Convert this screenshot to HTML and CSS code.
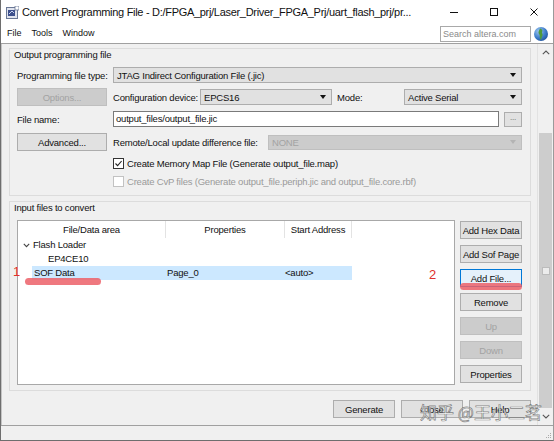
FILE: index.html
```html
<!DOCTYPE html>
<html>
<head>
<meta charset="utf-8">
<link rel="stylesheet" href="styles.css">
</head>
<body>
<div class="window">
  <div class="titlebar">
    <svg class="app-icon" width="13" height="13" viewBox="0 0 13 13">
      <rect x="0.5" y="1.5" width="11" height="11" fill="#dfe3ee" stroke="#6a7896"/>
      <rect x="2" y="4" width="7" height="6" fill="#3c4f8c"/>
      <path d="M3 8 L6 5 L8 7" stroke="#c9d3f0" stroke-width="1" fill="none"/>
      <rect x="9" y="0" width="4" height="4" fill="#ffffff" stroke="#6a7896" stroke-width="0.8"/>
    </svg>
    <span class="title">Convert Programming File - D:/FPGA_prj/Laser_Driver_FPGA_Prj/uart_flash_prj/pr...</span>
    <div class="wincontrols">
      <svg class="wc wc-min" width="10" height="10" viewBox="0 0 10 10"><path d="M1 5.5 H9" stroke="#111" stroke-width="1"/></svg>
      <svg class="wc wc-max" width="10" height="10" viewBox="0 0 10 10"><rect x="1.5" y="1.5" width="7" height="7" fill="none" stroke="#111" stroke-width="1"/></svg>
      <svg class="wc wc-close" width="10" height="10" viewBox="0 0 10 10"><path d="M1.5 1.5 L8.5 8.5 M8.5 1.5 L1.5 8.5" stroke="#111" stroke-width="1"/></svg>
    </div>
  </div>

  <div class="menubar">
    <span class="menu">File</span>
    <span class="menu">Tools</span>
    <span class="menu">Window</span>
    <div class="spacer"></div>
    <div class="search">Search altera.com</div>
    <svg class="globe" width="16" height="16" viewBox="0 0 16 16">
      <defs>
        <radialGradient id="gl" cx="0.35" cy="0.3" r="0.8">
          <stop offset="0" stop-color="#9cc6f0"/>
          <stop offset="0.6" stop-color="#3d7cc9"/>
          <stop offset="1" stop-color="#1d4f98"/>
        </radialGradient>
      </defs>
      <circle cx="8" cy="8" r="7" fill="url(#gl)"/>
      <path d="M7 2.5 C9 3 10 4.5 9 6 C8.5 7 10 8 9.5 9.5 C9 11 8 12 8.5 14 C7 13 6.5 11.5 6.8 10 C7 8.5 5.5 8 5.5 6.5 C5.5 5 6.5 4 7 2.5 Z" fill="#4f9a3c"/>
    </svg>
  </div>

  <div class="main">
    <div class="content">
      <div class="group g1">
        <div class="group-title">Output programming file</div>

        <div class="row r1">
          <span class="label lw96">Programming file type:</span>
          <div class="combo grow">
            <span>JTAG Indirect Configuration File (.jic)</span>
            <svg class="arrow" width="6" height="4" viewBox="0 0 6 4"><path d="M0 0 H6 L3 4 Z" fill="#111"/></svg>
          </div>
        </div>

        <div class="row r2">
          <div class="btn btn-side disabled">Options...</div>
          <span class="label lw87 ml6">Configuration device:</span>
          <div class="combo w132">
            <span>EPCS16</span>
            <svg class="arrow" width="6" height="4" viewBox="0 0 6 4"><path d="M0 0 H6 L3 4 Z" fill="#111"/></svg>
          </div>
          <span class="label lw67 ml5">Mode:</span>
          <div class="combo w118">
            <span>Active Serial</span>
            <svg class="arrow" width="6" height="4" viewBox="0 0 6 4"><path d="M0 0 H6 L3 4 Z" fill="#111"/></svg>
          </div>
        </div>

        <div class="row r3">
          <span class="label lw96">File name:</span>
          <div class="textbox">output_files/output_file.jic</div>
          <div class="btn dots">...</div>
        </div>

        <div class="row r4">
          <div class="btn btn-side">Advanced...</div>
          <span class="label lw155 ml6">Remote/Local update difference file:</span>
          <div class="combo combo-dis grow">
            <span>NONE</span>
            <svg class="arrow" width="6" height="4" viewBox="0 0 6 4"><path d="M0 0 H6 L3 4 Z" fill="#b4b4b4"/></svg>
          </div>
        </div>

        <div class="row r5 check-row">
          <span class="cb">
            <svg width="9" height="9" viewBox="0 0 9 9"><path d="M1.5 4.5 L3.6 6.6 L7.6 2" stroke="#222" stroke-width="1.1" fill="none"/></svg>
          </span>
          <span class="cb-label">Create Memory Map File (Generate output_file.map)</span>
        </div>

        <div class="row r6 check-row">
          <span class="cb cb-dis"></span>
          <span class="cb-label dis-text">Create CvP files (Generate output_file.periph.jic and output_file.core.rbf)</span>
        </div>
      </div>

      <div class="group g2">
        <div class="group-title">Input files to convert</div>
        <div class="inputs">
          <div class="table">
            <div class="thead">
              <div class="th c1">File/Data area</div>
              <div class="th c2">Properties</div>
              <div class="th c3">Start Address</div>
            </div>
            <div class="tr tr-parent">
              <span class="expander">
                <svg width="7" height="5" viewBox="0 0 7 5"><path d="M0.8 0.8 L3.5 3.6 L6.2 0.8" stroke="#444" stroke-width="1.1" fill="none"/></svg>
              </span>
              <span>Flash Loader</span>
            </div>
            <div class="tr tr-child">EP4CE10</div>
            <div class="tr tr-sel">
              <span class="td d1">SOF Data</span>
              <span class="td d2">Page_0</span>
              <span class="td d3">&lt;auto&gt;</span>
            </div>
          </div>
          <div class="side-buttons">
            <div class="btn">Add Hex Data</div>
            <div class="btn">Add Sof Page</div>
            <div class="btn focused">Add File...</div>
            <div class="btn">Remove</div>
            <div class="btn disabled">Up</div>
            <div class="btn disabled">Down</div>
            <div class="btn">Properties</div>
          </div>
        </div>
      </div>

      <div class="dialog-buttons">
        <div class="btn">Generate</div>
        <div class="btn">Close</div>
        <div class="btn">Help</div>
      </div>
    </div>

    <div class="vscroll">
      <div class="sb-btn">
        <svg width="8" height="5" viewBox="0 0 8 5"><path d="M0.8 4.2 L4 1 L7.2 4.2" stroke="#555" stroke-width="1.1" fill="none"/></svg>
      </div>
      <div class="sb-track">
        <div class="sb-thumb"><span class="grip"></span></div>
      </div>
      <div class="sb-btn">
        <svg width="8" height="5" viewBox="0 0 8 5"><path d="M0.8 0.8 L4 4 L7.2 0.8" stroke="#555" stroke-width="1.1" fill="none"/></svg>
      </div>
    </div>
  </div>

  <div class="statusbar">
    <svg class="sizegrip" width="8" height="8" viewBox="0 0 8 8">
      <rect x="6" y="2" width="1" height="1" fill="#aaa"/>
      <rect x="4" y="4" width="1" height="1" fill="#aaa"/>
      <rect x="6" y="4" width="1" height="1" fill="#aaa"/>
      <rect x="2" y="6" width="1" height="1" fill="#aaa"/>
      <rect x="4" y="6" width="1" height="1" fill="#aaa"/>
      <rect x="6" y="6" width="1" height="1" fill="#aaa"/>
    </svg>
  </div>

  <span class="note note1">1</span>
  <span class="mark mark1"></span>
  <span class="note note2">2</span>
  <span class="mark mark2"></span>
  <div class="watermark">知乎 @王小二茗</div>
</div>
</body>
</html>
```

FILE: styles.css
```css
* { box-sizing: border-box; }

html, body {
  margin: 0;
  padding: 0;
  background: #ffffff;
}

body {
  font-family: "Liberation Sans", Arial, sans-serif;
  font-size: 9.5px;
  letter-spacing: -0.2px;
  color: #111;
}

.window {
  position: relative;
  width: 554px;
  height: 441px;
  border-left: 1px solid #6e6e6e;
  border-right: 1px solid #9a9a9a;
  border-bottom: 1px solid #6e6e6e;
  display: flex;
  flex-direction: column;
  overflow: hidden;
}

/* title bar */
.titlebar {
  height: 23px;
  flex: none;
  display: flex;
  align-items: center;
  background: #fff;
  padding-left: 5px;
}
.app-icon { flex: none; margin-top: 1px; }
.title {
  margin-left: 3px;
  font-size: 11px;
  letter-spacing: -0.3px;
  color: #111;
  white-space: nowrap;
}
.wincontrols {
  margin-left: auto;
  display: flex;
  align-items: center;
}
.wc { display: block; }
.wc-min { margin-right: 30px; }
.wc-max { margin-right: 30px; }
.wc-close { margin-right: 14px; }

/* menu bar */
.menubar {
  height: 20px;
  flex: none;
  display: flex;
  align-items: center;
  background: #fff;
  padding-left: 6px;
  font-size: 9px;
  letter-spacing: 0;
}
.menu { margin-right: 10px; }
.spacer { flex: 1; }
.search {
  width: 91px;
  height: 16px;
  border: 1px solid #a9a9a9;
  background: #fff;
  color: #8a8a8a;
  font-size: 9px;
  line-height: 14px;
  padding-left: 2px;
  margin-top: 1px;
}
.globe { margin: 2px 4px 0 2px; display: block; }

/* main area */
.main {
  height: 382px;
  flex: none;
  display: flex;
  border-top: 1px solid #a0a0a0;
}
.content {
  flex: 1;
  background: #f0f0f0;
  border-left: 1px solid #c4c4c4;
  padding: 4px 6px 0 7px;
}

.group {
  border: 1px solid #dcdcdc;
  padding: 0 8px 8px 7px;
}
.group-title {
  margin: 0 0 0 -3px;
  line-height: 11px;
  height: 11px;
  white-space: nowrap;
}
.g2 { margin-top: 5px; padding-bottom: 5px; }

.row {
  display: flex;
  align-items: center;
  white-space: nowrap;
}
.r1 { margin-top: 7px; height: 16px; }
.r2 { margin-top: 5px; height: 18px; }
.r3 { margin-top: 5px; height: 16px; }
.r4 { margin-top: 6px; height: 18px; }
.r5 { margin-top: 6px; height: 12px; }
.r6 { margin-top: 6px; height: 12px; }

.label { flex: none; }
.lw96 { width: 96px; }
.lw87 { width: 87px; }
.lw67 { width: 67px; }
.lw155 { width: 155px; }
.ml6 { margin-left: 6px; }
.ml5 { margin-left: 5px; }

.grow { flex: 1; }
.w132 { width: 132px; flex: none; }
.w118 { width: 118px; flex: none; }

.combo {
  height: 16px;
  background: #e1e1e1;
  border: 1px solid #adadad;
  display: flex;
  align-items: center;
  justify-content: space-between;
  padding: 0 5px 0 3px;
}
.r4 .combo { height: 15px; }
.combo-dis {
  background: #cccccc;
  border-color: #bfbfbf;
  color: #a3a3a3;
}
.arrow { display: block; flex: none; }

.textbox {
  width: 386px;
  height: 16px;
  flex: none;
  background: #fff;
  border: 1px solid #7a7a7a;
  padding-left: 2px;
  line-height: 14px;
}

.btn {
  height: 18px;
  background: #e1e1e1;
  border: 1px solid #adadad;
  display: flex;
  align-items: center;
  justify-content: center;
  white-space: nowrap;
  color: #111;
}
.btn.disabled {
  background: #cccccc;
  border-color: #bfbfbf;
  color: #a3a3a3;
}
.btn.focused {
  background: #e5f1fb;
  border-color: #0078d7;
}
.btn-side { width: 90px; height: 18px; flex: none; }
.dots {
  width: 18px;
  height: 15px;
  margin-left: 5px;
  flex: none;
  color: #666;
  font-size: 8px;
  align-items: flex-start;
  line-height: 10px;
}

.check-row { padding-left: 96px; }
.cb {
  width: 11px;
  height: 11px;
  flex: none;
  background: #fff;
  border: 1px solid #333;
  display: flex;
  align-items: center;
  justify-content: center;
}
.cb svg { display: block; }
.cb-dis { border-color: #c2c2c2; }
.cb-label { margin-left: 3px; }
.dis-text { color: #9a9a9a; }

/* input files */
.inputs {
  margin-top: 7px;
  display: flex;
  gap: 5px;
}
.table {
  width: 438px;
  height: 165px;
  flex: none;
  background: #fff;
  border: 1px solid #a8a8a8;
}
.thead {
  display: flex;
  height: 17px;
}
.th {
  border-right: 1px solid #e3e3e3;
  text-align: center;
  line-height: 17px;
  white-space: nowrap;
}
.c1 { width: 148px; }
.c2 { width: 119px; }
.c3 { width: 67px; }

.tr {
  height: 14px;
  line-height: 14px;
  white-space: nowrap;
  display: flex;
  align-items: center;
}
.expander {
  width: 15px;
  display: flex;
  justify-content: center;
  padding-left: 2px;
}
.expander svg { display: block; }
.tr-child { padding-left: 30px; }
.tr-sel {
  margin-left: 14px;
  width: 320px;
  background: #cce8ff;
}
.td { display: block; }
.d1 { width: 134px; padding-left: 2px; }
.d2 { width: 119px; padding-left: 1px; }
.d3 { width: 67px; }

.side-buttons {
  width: 62px;
  flex: none;
  padding-top: 1px;
  display: flex;
  flex-direction: column;
  gap: 6px;
}

.dialog-buttons {
  margin-top: 9px;
  display: flex;
  justify-content: flex-end;
  gap: 6px;
}
.dialog-buttons .btn { width: 62px; height: 18px; }

/* scrollbar */
.vscroll {
  width: 16px;
  flex: none;
  background: #f0f0f0;
  border-left: 1px solid #e2e2e2;
  display: flex;
  flex-direction: column;
}
.sb-btn {
  height: 17px;
  flex: none;
  display: flex;
  align-items: center;
  justify-content: center;
}
.sb-btn svg { display: block; }
.sb-track {
  flex: 1;
  padding-top: 72px;
  display: flex;
  flex-direction: column;
}
.sb-thumb {
  flex: 1;
  margin: 0 1px 0 1px;
  background: #cdcdcd;
  display: flex;
  align-items: center;
  justify-content: center;
}
.grip {
  width: 8px;
  height: 8px;
  background: #ececec;
  border: 1px solid #bcbcbc;
}

/* status bar */
.statusbar {
  height: 15px;
  flex: none;
  background: #f0f0f0;
  border-top: 1px solid #a0a0a0;
  display: flex;
  justify-content: flex-end;
  align-items: flex-end;
  padding: 0 1px 1px 0;
}
.sizegrip { display: block; }

/* annotations drawn over the screenshot */
.note {
  position: absolute;
  color: #e0302c;
  font-size: 13px;
  letter-spacing: 0;
  line-height: 14px;
}
.note1 { left: 12px; top: 265px; }
.note2 { left: 428px; top: 268px; }
.mark {
  position: absolute;
  height: 7px;
  border-radius: 4px;
  background: rgba(236, 96, 104, 0.85);
}
.mark1 { left: 24px; top: 278px; width: 76px; }
.mark2 { left: 459px; top: 283px; width: 62px; }

.watermark {
  position: absolute;
  left: 419px;
  top: 400px;
  font-family: "Noto Sans CJK SC", sans-serif;
  font-size: 17px;
  line-height: 24px;
  letter-spacing: 0;
  color: rgba(255, 255, 255, 0.85);
  -webkit-text-stroke: 0.7px rgba(80, 80, 80, 0.7);
  white-space: nowrap;
}
```
